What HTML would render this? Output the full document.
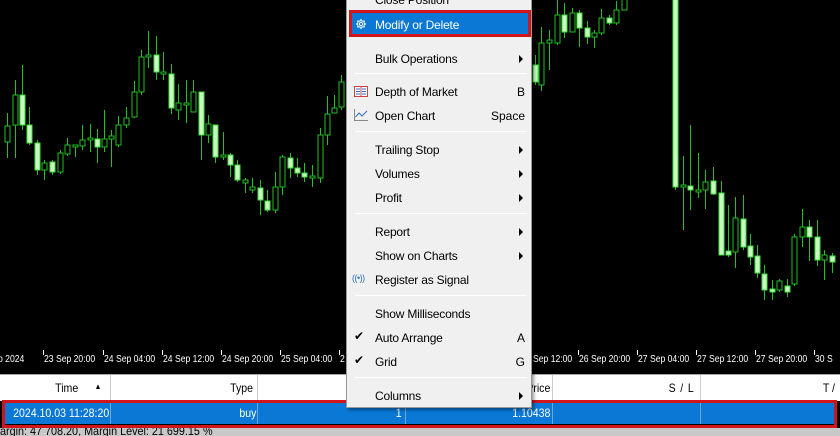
<!DOCTYPE html>
<html><head><meta charset="utf-8"><style>
*{margin:0;padding:0;box-sizing:border-box}
body{width:840px;height:436px;overflow:hidden;background:#000;font-family:"Liberation Sans",sans-serif;position:relative}
#chart{position:absolute;left:0;top:0}
.ax{position:absolute;top:354px;font-size:10px;color:#fff;white-space:nowrap;transform:scaleX(0.86);transform-origin:left top}
.tick{position:absolute;top:350px;width:1px;height:5px;background:#fff}
#hdr{position:absolute;left:0;top:374px;width:840px;height:27px;background:#fff;border-top:1px solid #aaa}
#row{position:absolute;left:4px;top:403px;width:832px;height:21px;background:#0a78d4}
.c{position:absolute;font-size:12px;white-space:nowrap;transform:scaleX(0.88)}
.r{transform-origin:right top}
.vd{position:absolute;width:1px;background:#ccc}
#red{position:absolute;left:2px;top:400px;width:835px;height:28px;border:3px solid #d0161b}
#status{position:absolute;left:0;top:428px;width:840px;height:8px;background:#c8c8c8;overflow:hidden}
#status span{position:absolute;left:0;top:-4px;font-size:12px;color:#000;transform:scaleX(0.9);transform-origin:left top;white-space:nowrap}
#menu{position:absolute;left:346px;top:-10px;width:186px;height:418px;background:#f0f0f0;border:1px solid #999;box-shadow:2px 2px 3px rgba(0,0,0,.4)}
.mi{position:absolute;left:28px;font-size:12px;color:#000;letter-spacing:-0.2px;white-space:nowrap}
.sc{position:absolute;right:6px;font-size:12px;color:#000}
.ar{position:absolute;right:8px;width:0;height:0;border-top:4px solid transparent;border-bottom:4px solid transparent;border-left:4px solid #000}
.sep{position:absolute;left:8px;right:4px;height:1px;background:#ccc;border-bottom:1px solid #fff}
</style></head><body>
<svg id="chart" width="840" height="350"></svg>
<div class="ax" style="left:-2px">p 2024</div>
<div class="tick" style="left:43px"></div><div class="ax" style="left:44px">23 Sep 20:00</div>
<div class="tick" style="left:103px"></div><div class="ax" style="left:104px">24 Sep 04:00</div>
<div class="tick" style="left:162px"></div><div class="ax" style="left:163px">24 Sep 12:00</div>
<div class="tick" style="left:221px"></div><div class="ax" style="left:222px">24 Sep 20:00</div>
<div class="tick" style="left:280px"></div><div class="ax" style="left:281px">25 Sep 04:00</div>
<div class="tick" style="left:339px"></div><div class="ax" style="left:340px">2</div>
<div class="ax" style="left:533px">Sep 12:00</div>
<div class="tick" style="left:578px"></div><div class="ax" style="left:579px">26 Sep 20:00</div>
<div class="tick" style="left:637px"></div><div class="ax" style="left:638px">27 Sep 04:00</div>
<div class="tick" style="left:696px"></div><div class="ax" style="left:697px">27 Sep 12:00</div>
<div class="tick" style="left:755px"></div><div class="ax" style="left:756px">27 Sep 20:00</div>
<div class="tick" style="left:814px"></div><div class="ax" style="left:815px">30 S</div>
<div id="hdr">
 <div class="c r" style="right:762px;top:6px">Time</div>
 <div class="c" style="left:94px;top:7px;font-size:8px">▲</div>
 <div class="vd" style="left:110px;top:0;height:26px"></div>
 <div class="c r" style="right:587px;top:6px">Type</div>
 <div class="vd" style="left:257px;top:0;height:26px"></div>
 <div class="vd" style="left:405px;top:0;height:26px"></div>
 <div class="c r" style="right:290px;top:6px">Price</div>
 <div class="vd" style="left:552px;top:0;height:26px"></div>
 <div class="c r" style="right:145px;top:6px;letter-spacing:1px">S / L</div>
 <div class="vd" style="left:700px;top:0;height:26px"></div>
 <div class="c" style="left:822px;top:6px">T /</div>
</div>
<div id="row">
 <div class="c r" style="right:727px;top:3px;color:#fff">2024.10.03 11:28:20</div>
 <div class="vd" style="left:106px;top:0;height:21px;background:#6aa8e0"></div>
 <div class="c r" style="right:580px;top:3px;color:#fff">buy</div>
 <div class="vd" style="left:253px;top:0;height:21px;background:#6aa8e0"></div>
 <div class="c r" style="right:434px;top:3px;color:#fff">1</div>
 <div class="vd" style="left:401px;top:0;height:21px;background:#6aa8e0"></div>
 <div class="c r" style="right:286px;top:3px;color:#fff">1.10438</div>
 <div class="vd" style="left:548px;top:0;height:21px;background:#6aa8e0"></div>
 <div class="vd" style="left:696px;top:0;height:21px;background:#6aa8e0"></div>
</div>
<div id="red"></div>
<div id="status"><span>argin: 47 708.20, Margin Level: 21 699.15 %</span></div>
<div id="menu">
 <div class="mi" style="top:2px">Close Position</div>
 <div style="position:absolute;left:2px;top:19px;width:182px;height:27px;border:3px solid #d0161b"></div>
 <div style="position:absolute;left:5px;top:22px;width:176px;height:21px;background:#0a78d4"></div>
 <svg style="position:absolute;left:8px;top:27px" width="12" height="12" viewBox="0 0 12 12"><path d="M6 1.5 L7.2 3.2 9.3 3 9 5 10.5 6 9 7 9.3 9 7.2 8.8 6 10.5 4.8 8.8 2.7 9 3 7 1.5 6 3 5 2.7 3 4.8 3.2Z" fill="none" stroke="#fff" stroke-width="1"/><circle cx="6" cy="6" r="1.6" fill="none" stroke="#fff"/></svg>
 <div class="mi" style="top:27px;color:#fff">Modify or Delete</div>
 <div class="mi" style="top:61px">Bulk Operations</div><div class="ar" style="top:64px"></div>
 <div class="sep" style="top:82px"></div>
 <svg style="position:absolute;left:7px;top:95px" width="14" height="11"><rect x="0.5" y="0.5" width="13" height="10" fill="#fff" stroke="#d04040"/><path d="M2 3h4M2 5.5h4M2 8h4M8 3h4M8 5.5h4M8 8h4" stroke="#3070c0"/><path d="M7 1v9" stroke="#d04040"/></svg>
 <div class="mi" style="top:94px">Depth of Market</div><div class="sc" style="top:94px">B</div>
 <svg style="position:absolute;left:7px;top:118px" width="14" height="12"><path d="M0.5 0v11.5H14" stroke="#888" fill="none"/><path d="M1.5 8 L5 4 L8 7 L13 2" stroke="#3070c0" fill="none"/></svg>
 <div class="mi" style="top:118px">Open Chart</div><div class="sc" style="top:118px">Space</div>
 <div class="sep" style="top:140px"></div>
 <div class="mi" style="top:152px">Trailing Stop</div><div class="ar" style="top:155px"></div>
 <div class="mi" style="top:176px">Volumes</div><div class="ar" style="top:179px"></div>
 <div class="mi" style="top:200px">Profit</div><div class="ar" style="top:203px"></div>
 <div class="sep" style="top:222px"></div>
 <div class="mi" style="top:234px">Report</div><div class="ar" style="top:237px"></div>
 <div class="mi" style="top:258px">Show on Charts</div><div class="ar" style="top:261px"></div>
 <div style="position:absolute;left:5px;top:282px;font-size:9px;color:#3070c0;letter-spacing:-0.5px">((•))</div>
 <div class="mi" style="top:282px">Register as Signal</div>
 <div class="sep" style="top:304px"></div>
 <div class="mi" style="top:316px">Show Milliseconds</div>
 <div style="position:absolute;left:7px;top:338px;font-size:12px">✔</div>
 <div class="mi" style="top:340px">Auto Arrange</div><div class="sc" style="top:340px">A</div>
 <div style="position:absolute;left:7px;top:362px;font-size:12px">✔</div>
 <div class="mi" style="top:364px">Grid</div><div class="sc" style="top:364px">G</div>
 <div class="sep" style="top:386px"></div>
 <div class="mi" style="top:398px">Columns</div><div class="ar" style="top:401px"></div>
</div>
<script>
var d=[[7,113,158,126,142,0],[15,80,158,95,125,0],[22,65,130,95,125,1],[29,107,145,125,143,1],[37,140,175,143,170,1],[44,160,180,163,170,0],[52,160,175,162,172,1],[60,150,174,153,172,0],[67,138,156,145,154,0],[75,145,157,145,147,0],[82,125,150,140,146,0],[90,124,152,138,140,0],[97,129,163,139,147,1],[104,110,152,139,147,0],[111,130,167,136,139,0],[118,116,147,125,145,0],[126,107,128,118,125,0],[134,81,118,92,117,0],[141,50,95,57,92,0],[148,31,68,55,57,0],[156,36,80,55,72,1],[163,52,80,72,74,0],[171,64,114,74,108,1],[178,84,120,103,110,0],[186,80,123,103,105,0],[193,80,112,92,112,0],[201,92,160,92,135,1],[208,115,143,124,135,0],[215,125,163,125,157,1],[223,132,160,155,157,0],[230,153,177,155,165,1],[237,160,182,165,180,1],[245,178,193,180,183,0],[252,178,193,187,190,0],[260,180,215,188,200,1],[267,190,212,201,210,1],[275,172,213,187,210,0],[282,155,195,157,187,0],[290,153,178,158,168,1],[297,158,177,168,173,1],[304,163,182,173,177,1],[312,165,187,176,178,0],[320,128,183,135,178,0],[327,96,145,114,135,0],[334,95,113,108,113,0],[341,75,110,82,107,0],
[535,55,85,65,82,1],[541,27,91,43,85,0],[549,30,70,40,43,0],[557,0,45,15,43,0],[564,3,38,15,32,1],[572,8,32,13,32,0],[579,10,47,13,28,1],[587,21,44,28,37,1],[594,30,48,33,37,0],[601,9,35,18,33,0],[609,15,25,18,23,1],[616,1,25,10,23,0],[624,-5,10,-3,10,0],[675,-5,190,-3,187,1],[683,156,230,185,187,0],[690,125,210,186,190,1],[698,153,198,190,192,0],[705,170,209,182,190,0],[713,167,195,181,194,1],[721,181,255,193,255,1],[728,205,257,251,255,1],[735,197,268,218,252,0],[743,195,250,219,247,1],[750,234,265,246,257,1],[757,245,278,256,273,1],[764,265,300,274,290,1],[772,280,300,289,292,1],[779,279,292,281,290,0],[787,279,297,286,292,1],[794,234,286,237,284,0],[802,209,247,227,237,0],[809,220,261,227,237,1],[817,220,266,237,260,1],[824,250,280,255,260,0],[832,253,273,256,262,1]];
var s='';d.forEach(function(c){var x=c[0];s+='<line x1="'+(x+.5)+'" y1="'+c[1]+'" x2="'+(x+.5)+'" y2="'+c[2]+'" stroke="#22c022"/>';s+='<rect x="'+(x-2)+'" y="'+c[3]+'" width="5" height="'+Math.max(1,c[4]-c[3])+'" fill="'+(c[5]?'#c8f8c0':'#000')+'" stroke="'+(c[5]?'#40e040':'#22c022')+'"/>';});
document.getElementById('chart').innerHTML=s;
</script>
</body></html>
